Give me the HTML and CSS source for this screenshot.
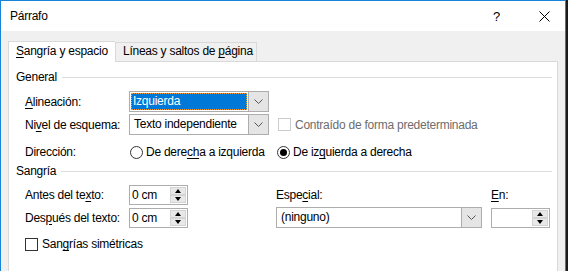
FILE: index.html
```html
<!DOCTYPE html>
<html lang="es">
<head>
    <meta charset="UTF-8">
    <title>Párrafo</title>
    <link rel="stylesheet" href="styles.css">
</head>
<body>
    <div class="window">
        <div class="titlebar">
            <span class="title">Párrafo</span>
            <span class="help">?</span>
            <span class="close">
                <svg width="11" height="11" viewBox="0 0 11 11"><path d="M0.5 0.5 L10.5 10.5 M10.5 0.5 L0.5 10.5" stroke="#000" stroke-width="1"/></svg>
            </span>
        </div>

        <div class="content">
            <div class="tabs">
                <div class="tab active"><u>S</u>angría y espacio</div>
                <div class="tab">Líneas y saltos de <u>p</u>ágina</div>
            </div>

            <div class="panel">
                <div class="group-head"><span>General</span><div class="rule"></div></div>

                <div class="row first">
                    <label class="field-label"><u>A</u>lineación:</label>
                    <div class="combo">
                        <div class="combo-value selected"><span>Izquierda</span></div>
                        <div class="combo-btn"><svg width="9" height="5" viewBox="0 0 9 5"><path d="M0.5 0.5 L4.5 4.5 L8.5 0.5" fill="none" stroke="#555"/></svg></div>
                    </div>
                </div>

                <div class="row">
                    <label class="field-label">Ni<u>v</u>el de esquema:</label>
                    <div class="combo">
                        <div class="combo-value">Texto independiente</div>
                        <div class="combo-btn"><svg width="9" height="5" viewBox="0 0 9 5"><path d="M0.5 0.5 L4.5 4.5 L8.5 0.5" fill="none" stroke="#555"/></svg></div>
                    </div>
                    <div class="check disabled"><span class="box"></span><span>Contraído de forma predeterminada</span></div>
                </div>

                <div class="row radios">
                    <label class="field-label">Dirección:</label>
                    <div class="radio"><span class="dot"></span><span>De dere<u>ch</u>a a izquierda</span></div>
                    <div class="radio checked"><span class="dot"></span><span>De iz<u>q</u>uierda a derecha</span></div>
                </div>

                <div class="group-head"><span>Sangría</span><div class="rule"></div></div>

                <div class="indent-grid">
                    <label class="field-label">Antes del te<u>x</u>to:</label>
                    <div class="spin"><span class="spin-value">0 cm</span><div class="spin-btns"><span class="up"></span><span class="down"></span></div></div>
                    <label class="col-label special">Espe<u>c</u>ial:</label>
                    <label class="col-label en"><u>E</u>n:</label>

                    <label class="field-label">Des<u>p</u>ués del texto:</label>
                    <div class="spin"><span class="spin-value">0 cm</span><div class="spin-btns"><span class="up"></span><span class="down"></span></div></div>
                    <div class="combo wide">
                        <div class="combo-value">(ninguno)</div>
                        <div class="combo-btn"><svg width="9" height="5" viewBox="0 0 9 5"><path d="M0.5 0.5 L4.5 4.5 L8.5 0.5" fill="none" stroke="#555"/></svg></div>
                    </div>
                    <div class="spin en"><span class="spin-value"></span><div class="spin-btns"><span class="up"></span><span class="down"></span></div></div>
                </div>

                <div class="check mirror"><span class="box"></span><span>San<u>g</u>rías simétricas</span></div>
            </div>
        </div>
    </div>
</body>
</html>
```

FILE: styles.css
```css
* {
    margin: 0;
    padding: 0;
    box-sizing: border-box;
}

body {
    font-family: 'Liberation Sans', Arial, sans-serif;
    font-size: 12px;
    letter-spacing: -0.25px;
    color: #000;
    background: #1b1b1b;
    height: 271px;
    overflow: hidden;
    white-space: nowrap;
}

u {
    text-decoration: underline;
    text-underline-offset: 2px;
}

.window {
    width: 566px;
    height: 300px;
    border: 1px solid #1883d7;
    background: #f0f0f0;
}

.titlebar {
    height: 30px;
    background: #fff;
    display: flex;
    align-items: center;
    padding-left: 9px;
}

.title {
    flex: 1;
}

.help {
    width: 46px;
    font-size: 13px;
}

.close {
    width: 26px;
    display: flex;
    align-items: center;
}

.content {
    padding: 9px 7px 0 7px;
}

.tabs {
    display: flex;
    align-items: flex-end;
    height: 21px;
}

.tab {
    height: 19px;
    width: 142px;
    padding: 0 7px;
    border: 1px solid #d9d9d9;
    border-bottom: none;
    line-height: 17px;
    background: #f0f0f0;
}

.tab.active {
    height: 21px;
    width: 107px;
    background: #fff;
    line-height: 19px;
    position: relative;
    top: 1px;
    border-right: none;
}

.panel {
    width: 550px;
    height: 240px;
    border: 1px solid #d9d9d9;
    background: #fff;
    padding: 7px 5px 0 7px;
}

.group-head {
    height: 16px;
    display: flex;
    align-items: center;
    gap: 5px;
}

.group-head .rule {
    flex: 1;
    height: 1px;
    background: #dcdcdc;
}

.row {
    display: flex;
    align-items: center;
    height: 21px;
    margin-top: 2px;
    padding-left: 9px;
}

.row.first {
    margin-top: 6px;
}

.row.radios {
    height: 22px;
    margin-top: 6px;
}

.field-label {
    width: 104px;
    flex: none;
}

.combo {
    width: 140px;
    height: 21px;
    display: flex;
    border: 1px solid #adadad;
    background: #fff;
}

.combo-value {
    flex: 1;
    line-height: 19px;
    padding-left: 4px;
}

.combo-value.selected {
    padding: 1px;
}

.combo-value.selected span {
    display: block;
    height: 17px;
    line-height: 17px;
    background: #0078d7;
    color: #fff;
    outline: 1px dotted #f0a040;
    outline-offset: -1px;
    padding-left: 2px;
}

.combo-btn {
    width: 20px;
    background: #e5e5e5;
    border-left: 1px solid #adadad;
    display: flex;
    align-items: center;
    justify-content: center;
}

.check {
    display: flex;
    align-items: center;
    gap: 4px;
}

.check .box {
    width: 13px;
    height: 13px;
    border: 1px solid #333;
    background: #fff;
}

.check.disabled {
    margin-left: 9px;
    color: #6d6d6d;
}

.check.disabled .box {
    border-color: #ccc;
}

.radio {
    display: flex;
    align-items: center;
    gap: 3px;
    width: 147px;
    padding-left: 1px;
}

.radio .dot {
    width: 13px;
    height: 13px;
    border: 1px solid #333;
    border-radius: 50%;
    display: flex;
    align-items: center;
    justify-content: center;
}

.radio.checked .dot::after {
    content: '';
    width: 7px;
    height: 7px;
    border-radius: 50%;
    background: #000;
}

.indent-grid {
    display: grid;
    grid-template-columns: 104px 59px 88px 206px 9px 59px;
    grid-template-rows: 20px 21px;
    row-gap: 2px;
    align-items: center;
    padding-left: 9px;
    margin-top: 6px;
}

.indent-grid .special {
    grid-column: 4;
}

.indent-grid .en {
    grid-column: 6;
}

.indent-grid .combo {
    grid-column: 4;
    width: 206px;
}

.spin {
    height: 20px;
    display: flex;
    border: 1px solid #adadad;
    background: #fff;
}

.spin-value {
    flex: 1;
    padding-left: 2px;
    line-height: 18px;
}

.spin-btns {
    width: 17px;
    display: flex;
    flex-direction: column;
    padding: 1px 1px 1px 0;
}

.spin-btns span {
    flex: 1;
    background: #e8e8e8;
    border: 1px solid #d4d4d4;
    display: flex;
    align-items: center;
    justify-content: center;
}

.spin-btns .up::after {
    content: '';
    border-left: 3px solid transparent;
    border-right: 3px solid transparent;
    border-bottom: 4px solid #000;
}

.spin-btns .down::after {
    content: '';
    border-left: 3px solid transparent;
    border-right: 3px solid transparent;
    border-top: 4px solid #000;
}

.check.mirror {
    margin-top: 9px;
    padding-left: 9px;
}
```
